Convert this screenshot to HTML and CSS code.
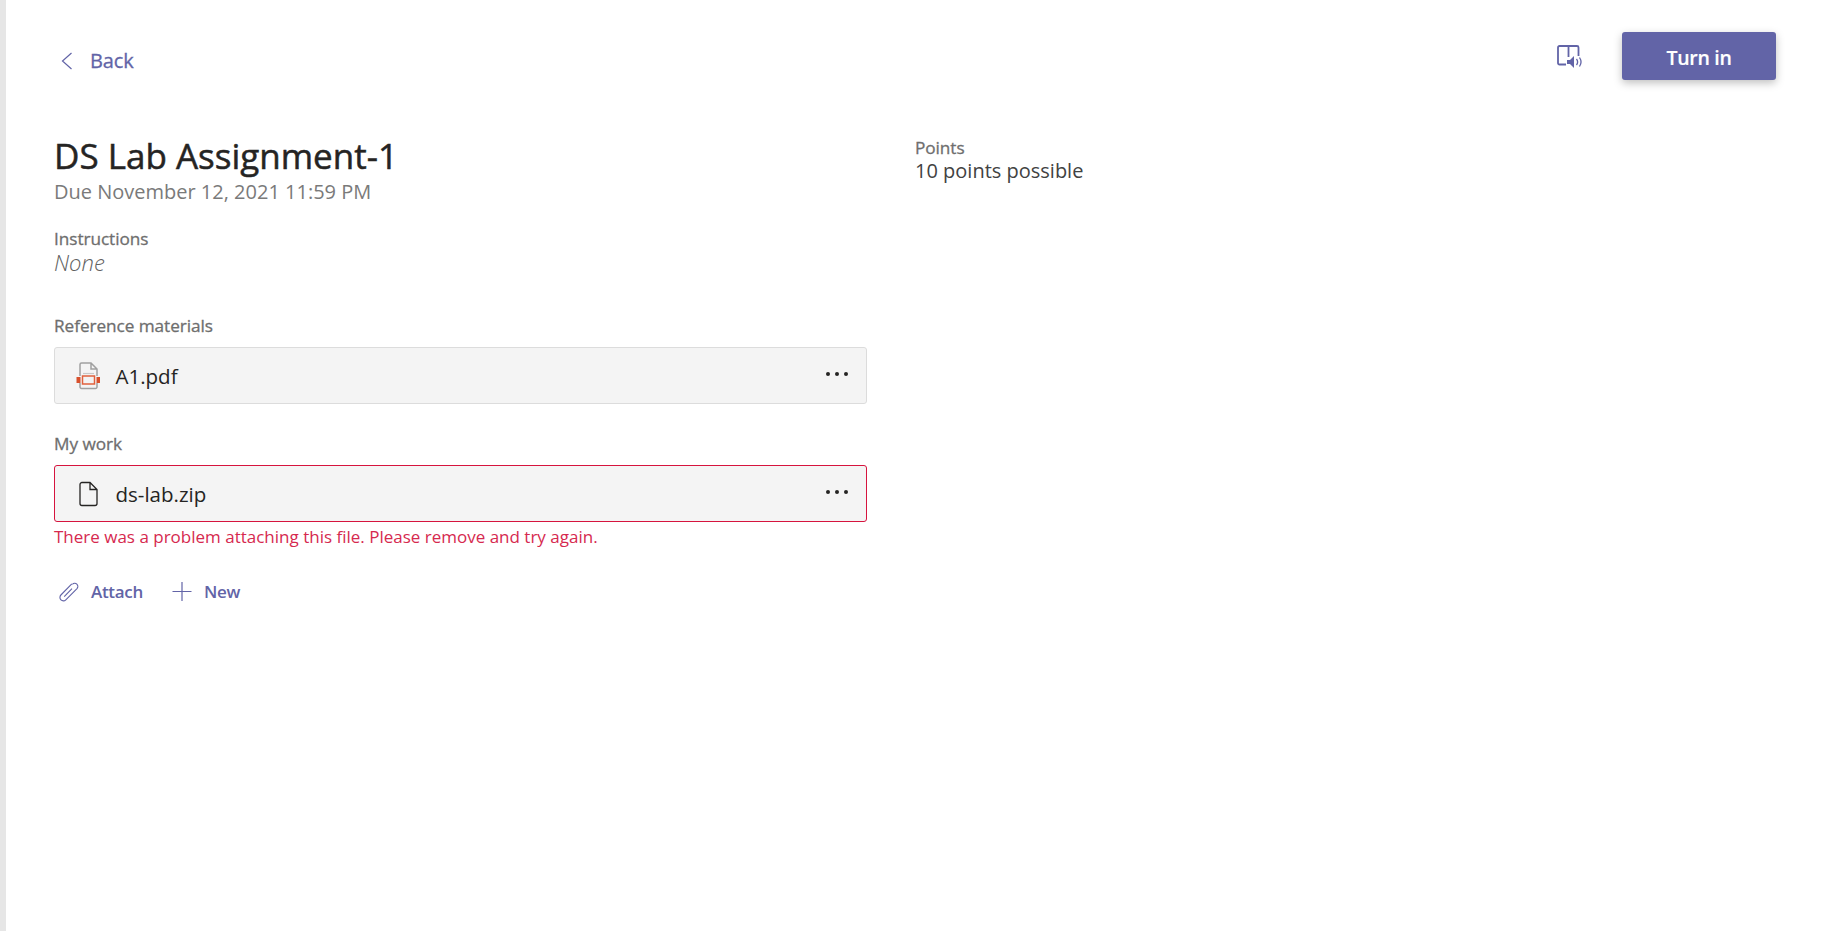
FILE: index.html
```html
<!DOCTYPE html>
<html lang="en">
<head>
<meta charset="utf-8">
<title>DS Lab Assignment-1</title>
<link rel="stylesheet" href="styles.css">
</head>
<body>
<div class="page">
  <div class="strip"></div>
  <main class="main">
    <header class="topbar">
      <a class="back">
        <svg class="chev" width="12" height="18" viewBox="0 0 12 18"><path d="M10.500 1 1.500 9l9 8" fill="none" stroke="#6264a7" stroke-width="1.200"/></svg>
        <span>Back</span>
      </a>
      <div class="actions">
        <svg class="reader" width="26" height="24" viewBox="0 0 26 24"><path d="M9 19.500H2.500A1.500 1.500 0 0 1 1 18V2.500A1.500 1.500 0 0 1 2.500 1H20a1.500 1.500 0 0 1 1.500 1.500V11M11.500 1v11" fill="none" stroke="#6264a7" stroke-width="1.800"/><path d="M10 15h3l4-4v12l-4-4h-3z" fill="#6264a7"/><path d="M19.500 14a5 5 0 0 1 0 6M22.500 12.500a8 8 0 0 1 0 9" fill="none" stroke="#6264a7" stroke-width="1.300"/></svg>
        <button class="turnin">Turn in</button>
      </div>
    </header>
    <div class="columns">
      <section class="left">
        <h1 class="title">DS Lab Assignment-1</h1>
        <div class="due">Due November 12, 2021 11:59 PM</div>
        <div class="label instr">Instructions</div>
        <div class="none">None</div>
        <div class="label ref">Reference materials</div>
        <div class="file">
          <svg class="ficon" width="24" height="28" viewBox="0 0 24 28"><path d="M4 14V2.500A1.500 1.500 0 0 1 5.500 1H15L21 7V14M21 21v4a1.500 1.500 0 0 1-1.500 1.500h-14A1.500 1.500 0 0 1 4 25V21M15 1V7h6" fill="none" stroke="#a0a0a0" stroke-width="1.500"/><path d="M7 11.500h11" stroke="#c8c8c8" stroke-width="1.200"/><rect x="6.500" y="14" width="12" height="8" fill="#f3f3f3" stroke="#e0603c" stroke-width="1.500"/><rect x="0.500" y="15" width="4" height="6" fill="#d8502c"/><rect x="20.500" y="15" width="3.500" height="6" fill="#d8502c"/></svg>
          <span class="fname">A1.pdf</span>
          <span class="dots"><i></i><i></i><i></i></span>
        </div>
        <div class="label mywork">My work</div>
        <div class="file bad">
          <svg class="ficon" width="24" height="26" viewBox="0 0 24 26"><path d="M4 3.500A2 2 0 0 1 6 1.500H14l7 7V22.500a2 2 0 0 1-2 2H6a2 2 0 0 1-2-2zM14 1.500V8.500h7" fill="none" stroke="#252423" stroke-width="1.300"/></svg>
          <span class="fname">ds-lab.zip</span>
          <span class="dots"><i></i><i></i><i></i></span>
        </div>
        <div class="error">There was a problem attaching this file. Please remove and try again.</div>
        <div class="tools">
          <a class="tool attach">
            <svg width="20" height="20" viewBox="0 0 20 20"><path d="M12.800 1.800 1.900 13a3.400 3.400 0 0 0 4.900 4.800L18 6.600a3.100 3.100 0 0 0-4.600-4.300M5.200 14.600l7.800-8" fill="none" stroke="#6264a7" stroke-width="1.100"/></svg>
            <span>Attach</span>
          </a>
          <a class="tool newb">
            <svg width="20" height="20" viewBox="0 0 20 20"><path d="M10 0v19M0.500 9.500h19" stroke="#6264a7" stroke-width="1.200"/></svg>
            <span>New</span>
          </a>
        </div>
      </section>
      <aside class="right">
        <div class="label">Points</div>
        <div class="pts">10 points possible</div>
      </aside>
    </div>
  </main>
</div>
</body>
</html>
```
FILE: styles.css
```css
* { box-sizing: border-box; }
html, body { margin: 0; height: 100%; background: #fff; overflow: hidden; }
body { font-family: "Open Sans", "Noto Sans", "Liberation Sans", sans-serif; color: #252423; }
.page { display: flex; height: 100vh; }
.strip { width: 6px; background: #e6e6e6; flex: none; }
.main { flex: 1; padding: 32px 48px 0 48px; }
.topbar { display: flex; justify-content: space-between; align-items: flex-start; height: 48px; }
.back { display: flex; align-items: center; gap: 17px; color: #6264a7; font-size: 20px; font-weight: 400; -webkit-text-stroke: 0.3px #6264a7; padding: 13px 0 0 7px; line-height: 32px; letter-spacing: -0.1px; }
.actions { display: flex; align-items: center; gap: 39px; height: 48px; }
.reader { display: block; margin-top: 2px; }
.turnin { width: 154px; height: 48px; padding-top: 4px; border: 0; border-radius: 3px; background: #6264a7; color: #fff; font: 600 19.500px/1 "Open Sans", sans-serif; -webkit-text-stroke: 0.2px #fff; box-shadow: 0 3px 8px rgba(0,0,0,.25); letter-spacing: -0.3px; }
.columns { display: flex; gap: 48px; padding-top: 76px; }
.left { width: 813px; flex: none; }
.title { margin: -22px 0 0; font-size: 35px; line-height: 44px; font-weight: 400; -webkit-text-stroke: 0.5px #252423; color: #252423; }
.due { font-size: 20px; line-height: 28px; color: #7a7a7a; }
.label { font-size: 17.200px; line-height: 24px; font-weight: 400; -webkit-text-stroke: 0.3px #6e6e6e; color: #6e6e6e; letter-spacing: -0.05px; }
.instr { margin-top: 21px; }
.none { font-size: 22px; font-style: italic; font-weight: 300; line-height: 24px; color: #616161; margin-top: -1px; }
.ref { margin-top: 40px; }
.file { display: flex; align-items: center; height: 57px; margin-top: 9px; padding: 0 18px 0 21px; background: #f4f4f4; border: 1px solid #dcdcdc; border-radius: 3px; }
.file.bad { border-color: #d6143e; border-width: 1.500px; }
.ficon { flex: none; display: block; }
.fname { margin-left: 15.500px; font-size: 20.500px; line-height: 28px; }
.dots { margin-left: auto; display: flex; gap: 5px; margin-bottom: 4px; }
.dots i { width: 4px; height: 4px; border-radius: 50%; background: #252423; display: block; }
.mywork { margin-top: 28px; }
.error { font-size: 17px; line-height: 24px; color: #d6294f; margin-top: 3px; }
.tools { display: flex; gap: 29px; margin-top: 31px; }
.tool { display: flex; align-items: center; gap: 12px; color: #6264a7; font-size: 17px; font-weight: 600; line-height: 24px; letter-spacing: -0.3px; }
.attach { padding-left: 5px; }
.right { margin-top: -20px; }
.pts { font-size: 20px; line-height: 24px; color: #424242; margin-top: -1px; }
```
